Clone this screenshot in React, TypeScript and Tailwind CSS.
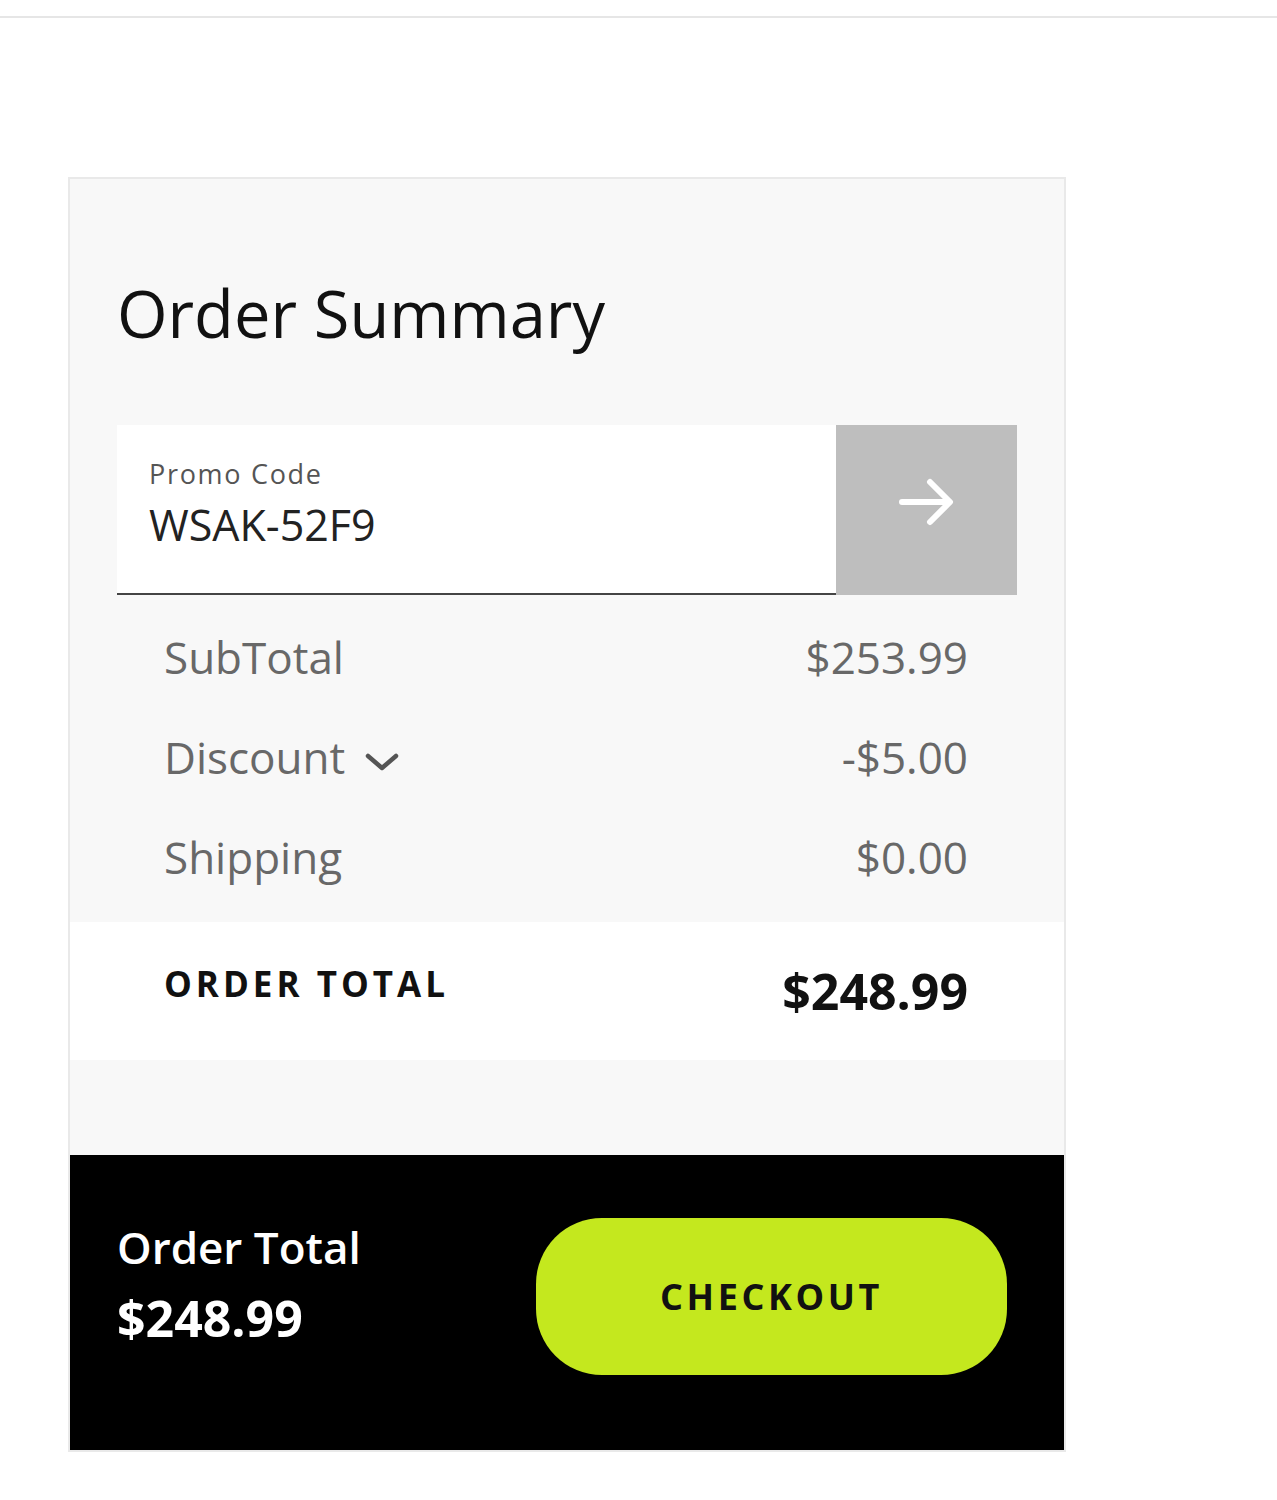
import React from "react";

function ArrowIcon() {
  return (
    <svg width="58" height="48" viewBox="0 0 58 48" fill="none">
      <path d="M4 24H51" stroke="white" strokeWidth="6" strokeLinecap="round" />
      <path d="M32 4L52 24L32 44" stroke="white" strokeWidth="6" strokeLinecap="round" strokeLinejoin="round" />
    </svg>
  );
}

function Chevron() {
  return (
    <svg width="34" height="20" viewBox="0 0 34 20" fill="none">
      <path d="M3 4L17 16L31 4" stroke="#555555" strokeWidth="4.5" strokeLinecap="round" strokeLinejoin="round" />
    </svg>
  );
}

function Row({ label, value, chevron }: { label: string; value: string; chevron?: boolean }) {
  return (
    <div className="flex items-start justify-between text-[44px] leading-none text-[#686868]">
      <div className="flex items-center gap-[20px]">
        <span>{label}</span>
        {chevron && (
          <span className="mt-[10px]">
            <Chevron />
          </span>
        )}
      </div>
      <span>{value}</span>
    </div>
  );
}

export default function App() {
  return (
    <div
      className="min-h-[1500px] bg-white"
      style={{ fontFamily: '"Open Sans", "Noto Sans", Arial, sans-serif' }}
    >
      <div className="h-[16px] bg-white" />
      <div className="h-[2px] bg-[#e6e6e6]" />
      <div className="pl-[68px] pt-[159px]">
        <div className="w-[998px] border-2 border-[#e9e9e9] bg-[#f8f8f8]">
          <div className="px-[47px] pt-[102px]">
            <h2 className="text-[65px] font-medium leading-none text-[#111111]">Order Summary</h2>
            <div className="mt-[79px] flex h-[170px]">
              <div className="flex-1 border-b-2 border-[#444444] bg-white pl-[32px] pt-[35px]">
                <div className="text-[27px] leading-none tracking-[1.7px] text-[#555555]">Promo Code</div>
                <div className="mt-[16px] text-[43px] leading-none text-[#222222]">WSAK-52F9</div>
              </div>
              <button className="flex w-[181px] items-center justify-center bg-[#bebebe] pb-[16px]">
                <ArrowIcon />
              </button>
            </div>
          </div>
          <div className="flex flex-col gap-[56px] pb-[43px] pl-[94px] pr-[96px] pt-[40px]">
            <Row label="SubTotal" value="$253.99" />
            <Row label="Discount" value="-$5.00" chevron />
            <Row label="Shipping" value="$0.00" />
          </div>
          <div className="flex h-[138px] items-start justify-between bg-white pl-[94px] pr-[96px] pt-[44px]">
            <span className="text-[35px] font-bold leading-none tracking-[4px] text-[#111111]">ORDER TOTAL</span>
            <span className="text-[50px] font-bold leading-none text-[#111111]">$248.99</span>
          </div>
          <div className="h-[95px]" />
          <div className="flex h-[295px] items-start justify-between bg-black pl-[47px] pr-[57px]">
            <div className="mt-[70px] flex flex-col">
              <span className="text-[44px] font-semibold leading-none text-white">Order Total</span>
              <span className="mt-[24px] text-[50px] font-bold leading-none text-white">$248.99</span>
            </div>
            <button className="mt-[63px] flex h-[157px] w-[471px] items-center justify-center rounded-[66px] bg-[#c4e81e]">
              <span className="text-[36px] font-bold leading-none tracking-[3.6px] text-[#111111]">CHECKOUT</span>
            </button>
          </div>
        </div>
      </div>
    </div>
  );
}
